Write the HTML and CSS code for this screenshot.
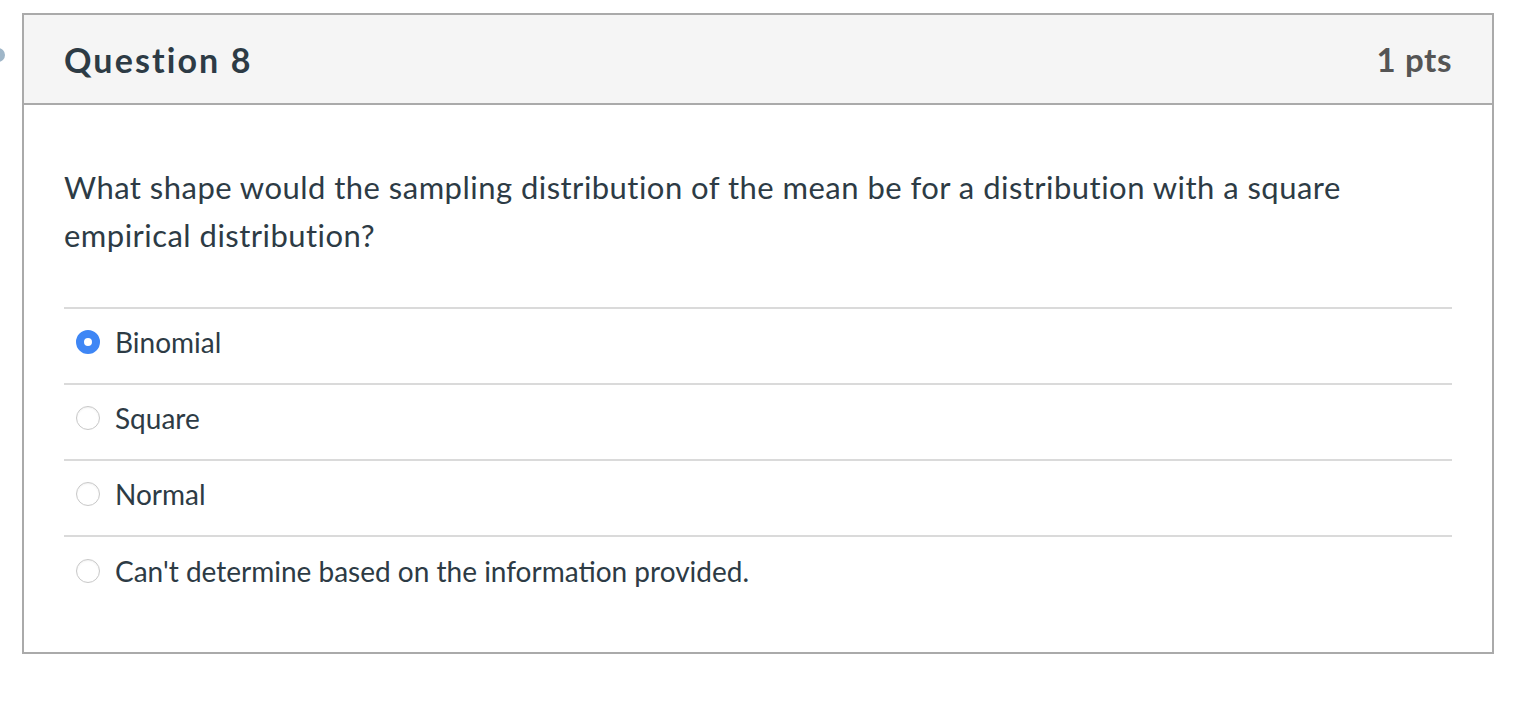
FILE: index.html
```html
<!DOCTYPE html>
<html lang="en">
<head>
<meta charset="utf-8">
<title>Question 8</title>
<link rel="stylesheet" href="styles.css">
</head>
<body>
<div class="page">
  <svg class="flag" width="8" height="16" viewBox="0 0 8 16"><circle cx="-2" cy="8" r="7" fill="#9fb6c8"/></svg>
  <div class="question">
    <div class="q-header">
      <h2 class="q-title">Question 8</h2>
      <div class="q-points">1 pts</div>
    </div>
    <div class="q-body">
      <p class="q-text">What shape would the sampling distribution of the mean be for a distribution with a square empirical distribution?</p>
      <div class="answers">
        <label class="answer"><span class="radio checked"></span><span class="answer-text">Binomial</span></label>
        <label class="answer"><span class="radio"></span><span class="answer-text">Square</span></label>
        <label class="answer"><span class="radio"></span><span class="answer-text">Normal</span></label>
        <label class="answer"><span class="radio"></span><span class="answer-text">Can't determine based on the information provided.</span></label>
      </div>
    </div>
  </div>
</div>
</body>
</html>
```
FILE: styles.css
```css
* { box-sizing: border-box; }
html, body { margin: 0; padding: 0; background: #fff; }
body { font-family: Lato, "Open Sans", sans-serif; color: #2d3b45; }
.page { position: relative; padding: 13px 0 0 22px; }
.flag { position: absolute; left: 0; top: 47px; }
.question { width: 1472px; border: 2px solid #aaaaaa; }
.q-header {
  display: flex; justify-content: space-between; align-items: center;
  height: 90px; padding: 0 40px 0 40px;
  background: #f5f5f5; border-bottom: 2px solid #aaaaaa;
}
.q-title { margin: 0; font-size: 34px; font-weight: 700; letter-spacing: 2.1px; color: #2d3b45; }
.q-points { font-size: 33px; font-weight: 700; letter-spacing: 0.6px; color: #555555; }
.q-body { padding: 58px 40px 39px 40px; }
.q-text { margin: 0 0 48px 0; font-size: 31px; letter-spacing: 0.47px; line-height: 48px; }
.answers { border-top: 2px solid #dadada; }
.answer {
  display: flex; align-items: center; height: 76px; padding-bottom: 8px;
  border-bottom: 2px solid #dadada; font-size: 28px;
}
.answer:last-child { border-bottom: none; }
.radio {
  width: 24px; height: 24px; border-radius: 50%; margin: 0 15px 0 12px;
  border: 1px solid #c8c8c8; background: #fff;
  box-shadow: inset 0 1px 2px rgba(0,0,0,0.06);
}
.radio.checked { border: 8px solid #3e86f5; background: #fff; box-shadow: none; }
```
